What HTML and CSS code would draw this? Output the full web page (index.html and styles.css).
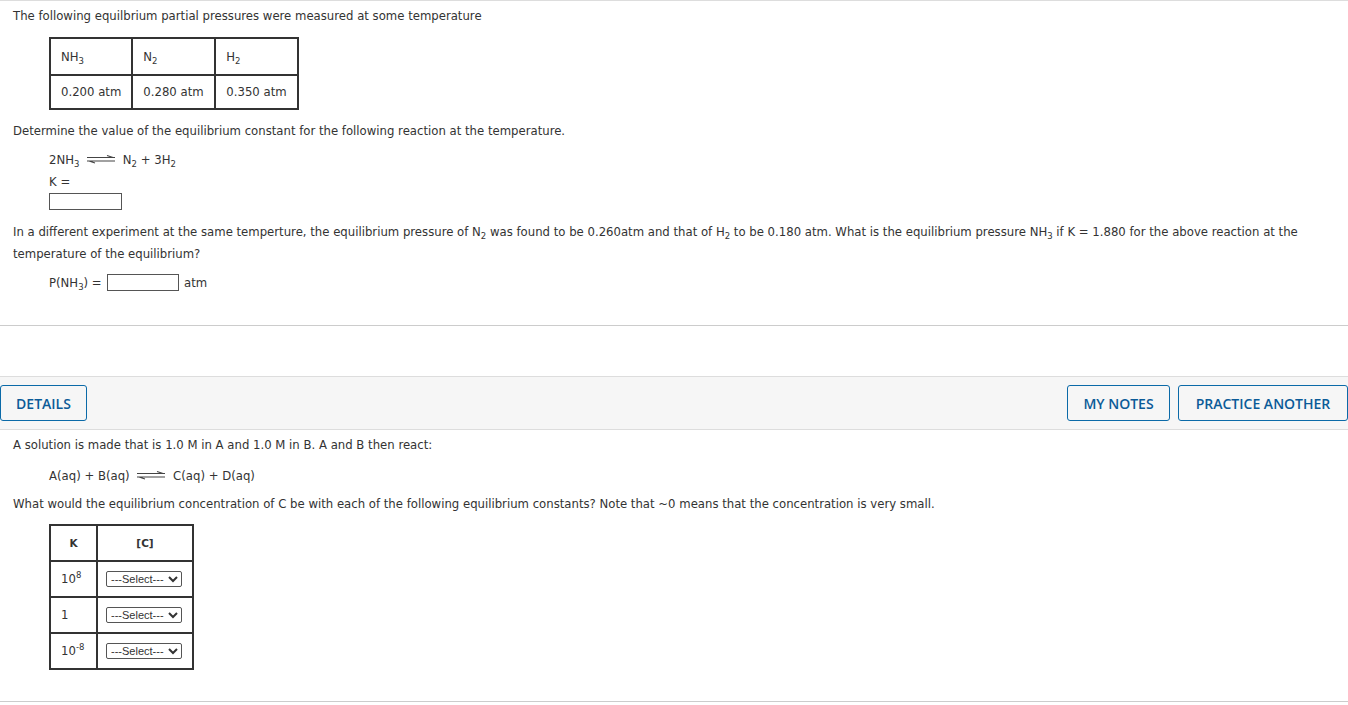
FILE: index.html
```html
<!DOCTYPE html>
<html>
<head>
<meta charset="utf-8">
<link rel="stylesheet" href="styles.css">
</head>
<body>
<div class="q q1">
  <p class="line first">The following equilbrium partial pressures were measured at some temperature</p>
  <table class="grid ptable">
    <tr><td>NH<sub>3</sub></td><td>N<sub>2</sub></td><td>H<sub>2</sub></td></tr>
    <tr><td>0.200 atm</td><td>0.280 atm</td><td>0.350 atm</td></tr>
  </table>
  <p class="line det">Determine the value of the equilibrium constant for the following reaction at the temperature.</p>
  <div class="indent rxn">2NH<sub>3</sub> <svg class="eq" width="30" height="10" viewBox="0 0 30 10"><path d="M1 3.5H29M21 1.5L27 3.5M1 7H29M3 7L9 9" stroke="#444" stroke-width="1.2" fill="none"/></svg> N<sub>2</sub> + 3H<sub>2</sub></div>
  <div class="indent klabel">K =</div>
  <div class="indent"><span class="box kbox"></span></div>
  <p class="line para">In a different experiment at the same temperture, the equilibrium pressure of N<sub>2</sub> was found to be 0.260atm and that of H<sub>2</sub> to be 0.180 atm. What is the equilibrium pressure NH<sub>3</sub> if K = 1.880 for the above reaction at the temperature of the equilibrium?</p>
  <div class="indent prow">P(NH<sub>3</sub>) = <span class="box pbox"></span> atm</div>
</div>
<div class="spacer"></div>
<div class="bar">
  <button class="btn details">DETAILS</button>
  <div class="right">
    <button class="btn">MY NOTES</button>
    <button class="btn">PRACTICE ANOTHER</button>
  </div>
</div>
<div class="q q2">
  <p class="line sol">A solution is made that is 1.0 M in A and 1.0 M in B. A and B then react:</p>
  <div class="indent rxn2">A(aq) + B(aq) <svg class="eq" width="30" height="10" viewBox="0 0 30 10"><path d="M1 3.5H29M21 1.5L27 3.5M1 7H29M3 7L9 9" stroke="#444" stroke-width="1.2" fill="none"/></svg> C(aq) + D(aq)</div>
  <p class="line what">What would the equilibrium concentration of C be with each of the following equilibrium constants? Note that ~0 means that the concentration is very small.</p>
  <table class="grid ctable">
    <tr class="head"><th>K</th><th>[C]</th></tr>
    <tr><td>10<sup>8</sup></td><td><select><option>---Select---</option></select></td></tr>
    <tr><td>1</td><td><select><option>---Select---</option></select></td></tr>
    <tr><td>10<sup>-8</sup></td><td><select><option>---Select---</option></select></td></tr>
  </table>
</div>
</body>
</html>
```
FILE: styles.css
```css
html, body { margin: 0; padding: 0; background: #fff; }
body {
  font-family: "DejaVu Sans", sans-serif;
  font-size: 11.7px;
  color: #333;
  border-top: 1px solid #ddd;
  width: 1348px;
}
p { margin: 0; }
sub, sup { font-size: 8.5px; line-height: 0; }
sub { vertical-align: -3px; }
sup { vertical-align: 5px; }
.q1 { padding: 0 13px; border-bottom: 1px solid #ccc; padding-bottom: 33px; }
.line { line-height: 22px; }
.first { margin-top: 4px; }
.grid { border-collapse: collapse; margin-left: 36px; }
.grid td, .grid th { border: 2px solid #333; padding: 0 10px; text-align: left; white-space: nowrap; }
.ptable { margin-top: 10px; }
.ptable td { height: 32px; padding: 0 10px; }
.ptable tr:first-child td { height: 35px; }
.ptable td:nth-child(1) { width: 60px; }
.ptable td:nth-child(2) { width: 61px; }
.ptable td:nth-child(3) { width: 60px; }
.det { margin-top: 10px; }
.indent { margin-left: 36px; }
.rxn { margin-top: 9px; line-height: 18px; }
.eq { vertical-align: 0px; margin: 0 3px; }
.klabel { line-height: 18px; margin-top: 4px; }
.box { display: inline-block; border: 1px solid #555; background: #fff; vertical-align: middle; box-sizing: border-box; }
.kbox { width: 73px; height: 17px; margin-top: 2px; display: block; }
.para { margin-top: 11px; }
.prow { margin-top: 9px; line-height: 18px; }
.pbox { width: 72px; height: 17px; margin-left: 2px; margin-right: 1px; vertical-align: -4px; }
.spacer { height: 50px; }
.bar {
  background: #f6f6f6;
  border-top: 1px solid #ddd;
  border-bottom: 1px solid #ddd;
  height: 52px;
  display: flex;
  align-items: center;
  justify-content: space-between;
}
.right { display: flex; gap: 8px; }
.btn {
  font-family: "Open Sans", sans-serif;
  font-weight: 600;
  font-size: 14px;
  color: #0b5b98;
  background: #f6f6f6;
  border: 1px solid #0b6aa8;
  border-radius: 3px;
  height: 36px;
  padding: 0 14px;
  margin: 0;
}
.details { padding: 0 14px; width: 87px; }
.right .btn:first-child { width: 103px; }
.right .btn:last-child { width: 170px; }
.q2 { padding: 0 13px; border-bottom: 1px solid #ccc; padding-bottom: 31px; }
.sol { margin-top: 4px; }
.rxn2 { margin-top: 11px; line-height: 18px; }
.what { margin-top: 8px; }
.ctable { margin-top: 9px; }
.ctable th { height: 34px; font-weight: bold; font-size: 10.5px; }
.ctable th:first-child { text-align: center; width: 25px; }
.ctable th:last-child { text-align: center; width: 74px; }
.ctable td { height: 34px; }
.ctable td:last-child { padding: 0 8px; }
select {
  font-family: "Liberation Sans", Arial, sans-serif;
  font-size: 11px;
  width: 76px;
  height: 16px;
  padding: 0;
  border: 1px solid #555;
  border-radius: 2px;
  background: #fff;
  color: #333;
}
```
